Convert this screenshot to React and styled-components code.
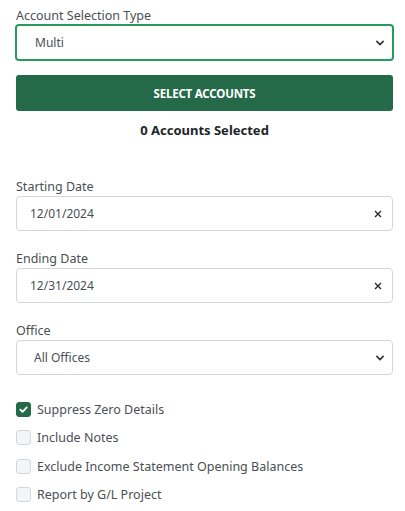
import React, { useState } from "react";
import styled, { createGlobalStyle } from "styled-components";

const GlobalStyle = createGlobalStyle`
  html, body {
    margin: 0;
    padding: 0;
    background: #fff;
  }
  body {
    font-family: "Noto Sans", "Open Sans", sans-serif;
    color: #212529;
  }
  * {
    box-sizing: border-box;
  }
`;

const Form = styled.div`
  width: 405px;
  padding: 7px 12px 0 16px;
  display: flex;
  flex-direction: column;
`;

const Field = styled.div`
  display: flex;
  flex-direction: column;
  margin-bottom: ${(p) => p.$mb || 0}px;
`;

const Label = styled.label`
  font-size: 12.5px;
  line-height: 18px;
  color: #4a4f55;
`;

const Control = styled.div`
  position: relative;
  width: 377px;
`;

const Select = styled.select`
  appearance: none;
  height: ${(p) => (p.$focused ? 37 : 35)}px;
  margin: ${(p) => (p.$focused ? "-1px 0 0 -1px" : "0")};
  width: ${(p) => (p.$focused ? "379px" : "100%")};
  padding: 0 30px 0 ${(p) => (p.$focused ? 18 : 17)}px;
  font-family: inherit;
  font-size: 12px;
  color: #4a4f55;
  background: #fff;
  border: ${(p) => (p.$focused ? "2px solid #2a9a5c" : "1px solid #d3d6da")};
  border-radius: 4px;
  outline: none;
`;

const Chevron = styled.svg`
  position: absolute;
  right: 8px;
  top: 50%;
  transform: translateY(-50%);
  pointer-events: none;
`;

const Input = styled.input`
  width: 100%;
  height: 35px;
  padding: 0 30px 0 13px;
  font-family: inherit;
  font-size: 12px;
  color: #4a4f55;
  background: #fff;
  border: 1px solid #d3d6da;
  border-radius: 4px;
  outline: none;
`;

const Clear = styled.button`
  position: absolute;
  right: 8px;
  top: 50%;
  transform: translateY(-50%);
  width: 14px;
  height: 14px;
  padding: 0;
  border: 0;
  background: none;
  display: flex;
  align-items: center;
  justify-content: center;
  cursor: pointer;
`;

const PrimaryButton = styled.button`
  width: 377px;
  height: 36px;
  margin-top: 14px;
  border: 0;
  border-radius: 3px;
  background: #256a48;
  color: #fff;
  font-family: inherit;
  font-size: 11.5px;
  font-weight: 700;
  letter-spacing: -0.2px;
  text-transform: uppercase;
  cursor: pointer;
`;

const Count = styled.div`
  width: 377px;
  text-align: center;
  font-size: 13px;
  font-weight: 700;
  color: #212529;
  margin-top: 10px;
  margin-bottom: 39px;
`;

const Options = styled.div`
  display: flex;
  flex-direction: column;
  gap: 10px;
  margin-top: 25px;
`;

const CheckRow = styled.label`
  display: flex;
  align-items: center;
  gap: 6px;
  height: 18.5px;
  font-size: 12.5px;
  color: #4a4f55;
  cursor: pointer;
`;

const Box = styled.span`
  width: 15px;
  height: 15px;
  border-radius: 3px;
  border: 1px solid ${(p) => (p.$on ? "#256a48" : "#d3d6da")};
  background: ${(p) => (p.$on ? "#256a48" : "#f4f5f6")};
  display: flex;
  align-items: center;
  justify-content: center;
  flex-shrink: 0;
`;

const ChevronIcon = () => (
  <Chevron width="10" height="10" viewBox="0 0 16 16">
    <path
      d="M3 5.5l5 5 5-5"
      fill="none"
      stroke="#343a40"
      strokeWidth="2.8"
      strokeLinecap="round"
      strokeLinejoin="round"
    />
  </Chevron>
);

function SelectField({ label, value, options, focused, mb }) {
  return (
    <Field $mb={mb}>
      <Label>{label}</Label>
      <Control>
        <Select $focused={focused} defaultValue={value}>
          {options.map((o) => (
            <option key={o}>{o}</option>
          ))}
        </Select>
        <ChevronIcon />
      </Control>
    </Field>
  );
}

function DateField({ label, value, mb }) {
  return (
    <Field $mb={mb}>
      <Label>{label}</Label>
      <Control>
        <Input defaultValue={value} />
        <Clear aria-label="Clear">
          <svg width="8" height="8" viewBox="0 0 8 8">
            <path d="M1 1l6 6M7 1L1 7" stroke="#212529" strokeWidth="1.3" />
          </svg>
        </Clear>
      </Control>
    </Field>
  );
}

const checks = [
  { label: "Suppress Zero Details", on: true },
  { label: "Include Notes", on: false },
  { label: "Exclude Income Statement Opening Balances", on: false },
  { label: "Report by G/L Project", on: false },
];

export default function App() {
  const [state, setState] = useState(checks.map((c) => c.on));

  return (
    <>
      <GlobalStyle />
      <Form>
        <SelectField
          label="Account Selection Type"
          value="Multi"
          options={["Single", "Multi", "Range"]}
          focused
        />
        <PrimaryButton>Select Accounts</PrimaryButton>
        <Count>0 Accounts Selected</Count>

        <DateField label="Starting Date" value="12/01/2024" mb={19} />
        <DateField label="Ending Date" value="12/31/2024" mb={19} />
        <SelectField
          label="Office"
          value="All Offices"
          options={["All Offices", "Main Office"]}
        />

        <Options>
          {checks.map((c, i) => (
            <CheckRow
              key={c.label}
              onClick={() =>
                setState((s) => s.map((v, j) => (j === i ? !v : v)))
              }
            >
              <Box $on={state[i]}>
                {state[i] && (
                  <svg width="9" height="9" viewBox="0 0 10 10">
                    <path
                      d="M1.5 5.2l2.4 2.4L8.6 2.6"
                      fill="none"
                      stroke="#fff"
                      strokeWidth="2"
                      strokeLinecap="round"
                      strokeLinejoin="round"
                    />
                  </svg>
                )}
              </Box>
              {c.label}
            </CheckRow>
          ))}
        </Options>
      </Form>
    </>
  );
}
